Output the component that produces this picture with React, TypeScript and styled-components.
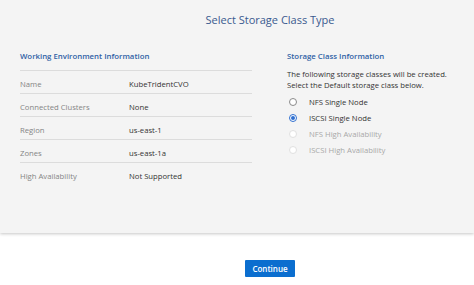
import React from 'react'
import styled, { createGlobalStyle } from 'styled-components'

const GlobalStyle = createGlobalStyle`
  body {
    margin: 0;
    background: #ffffff;
    font-family: 'Open Sans', 'Noto Sans', sans-serif;
  }
`

const envRows = [
  { label: 'Name', value: 'KubeTridentCVO' },
  { label: 'Connected Clusters', value: 'None' },
  { label: 'Region', value: 'us-east-1' },
  { label: 'Zones', value: 'us-east-1a' },
  { label: 'High Availability', value: 'Not Supported' },
]

const storageOptions = [
  { name: 'NFS Single Node', checked: false, disabled: false },
  { name: 'ISCSI Single Node', checked: true, disabled: false },
  { name: 'NFS High Availability', checked: false, disabled: true },
  { name: 'ISCSI High Availability', checked: false, disabled: true },
]

export default function App() {
  return (
    <>
      <GlobalStyle />
      <Panel>
        <Title>Select Storage Class Type</Title>
        <Columns>
          <EnvSection>
            <SectionHeading $bordered>Working Environment Information</SectionHeading>
            {envRows.map((row, i) => (
              <InfoRow key={row.label} $last={i === envRows.length - 1}>
                <InfoLabel>{row.label}</InfoLabel>
                <InfoValue>{row.value}</InfoValue>
              </InfoRow>
            ))}
          </EnvSection>
          <StorageSection>
            <SectionHeading>Storage Class Information</SectionHeading>
            <Intro>
              The following storage classes will be created.
              <br />
              Select the Default storage class below.
            </Intro>
            <OptionList>
              {storageOptions.map((opt) => (
                <Option key={opt.name} $disabled={opt.disabled}>
                  <Radio $checked={opt.checked} $disabled={opt.disabled} />
                  {opt.name}
                </Option>
              ))}
            </OptionList>
          </StorageSection>
        </Columns>
      </Panel>
      <Footer>
        <ContinueButton>Continue</ContinueButton>
      </Footer>
    </>
  )
}

const Panel = styled.div`
  height: 233px;
  background: #f4f4f4;
  box-shadow: 0 1px 3px rgba(0, 0, 0, 0.22);
  box-sizing: border-box;
`

const Title = styled.h1`
  margin: 0;
  height: 40px;
  line-height: 40px;
  padding-left: 66px;
  text-align: center;
  font-size: 11px;
  font-weight: 400;
  color: #3a5a8f;
`

const Columns = styled.div`
  display: flex;
  padding: 10px 0 0 20px;
`

const EnvSection = styled.section`
  width: 232px;
`

const StorageSection = styled.section`
  margin-left: 35px;
`

const SectionHeading = styled.h2<{ $bordered?: boolean }>`
  margin: 0;
  font-size: 7.8px;
  line-height: 12px;
  font-weight: 600;
  color: #2f61a5;
  padding-bottom: ${(p) => (p.$bordered ? '8px' : '0')};
  border-bottom: ${(p) => (p.$bordered ? '1px solid #dcdcdc' : 'none')};
`

const InfoRow = styled.div<{ $last?: boolean }>`
  display: flex;
  height: 23px;
  padding-top: 7px;
  box-sizing: border-box;
  font-size: 7.7px;
  line-height: 12px;
  border-bottom: ${(p) => (p.$last ? 'none' : '1px solid #dcdcdc')};
`

const InfoLabel = styled.span`
  width: 109px;
  color: #858585;
`

const InfoValue = styled.span`
  color: #333333;
`

const Intro = styled.p`
  margin: 7px 0 0;
  font-size: 7.7px;
  line-height: 10.5px;
  color: #333333;
`

const OptionList = styled.div`
  margin-top: 4px;
  display: flex;
  flex-direction: column;
`

const Option = styled.label<{ $disabled?: boolean }>`
  display: flex;
  align-items: center;
  height: 16px;
  padding-left: 2px;
  font-size: 7.7px;
  color: ${(p) => (p.$disabled ? '#a8a8a8' : '#333333')};
`

const Radio = styled.span<{ $checked?: boolean; $disabled?: boolean }>`
  width: 8px;
  height: 8px;
  margin-right: 12px;
  border-radius: 50%;
  box-sizing: border-box;
  background: #ffffff;
  border: 1px solid
    ${(p) => (p.$checked ? '#2f6fd0' : p.$disabled ? '#e0e0e0' : '#8a8a8a')};
  display: flex;
  align-items: center;
  justify-content: center;
  &::after {
    content: '';
    width: 4px;
    height: 4px;
    border-radius: 50%;
    background: #2f6fd0;
    display: ${(p) => (p.$checked ? 'block' : 'none')};
  }
`

const Footer = styled.div`
  display: flex;
  justify-content: center;
  padding: 27px 0 0 66px;
`

const ContinueButton = styled.button`
  width: 50px;
  height: 17px;
  padding: 0;
  border: none;
  border-radius: 1px;
  background: #0b6ecf;
  color: #ffffff;
  font-family: 'Open Sans', 'Noto Sans', sans-serif;
  font-size: 8px;
  font-weight: 600;
`
